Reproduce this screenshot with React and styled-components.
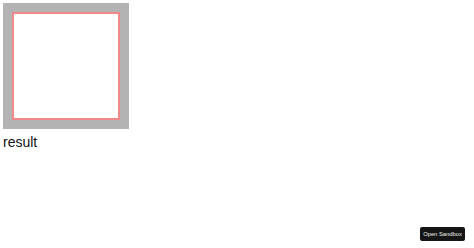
import React from 'react'
import styled, { createGlobalStyle } from 'styled-components'

const GlobalStyle = createGlobalStyle`
  html, body {
    margin: 0;
    padding: 0;
    background: #ffffff;
  }
  body {
    font-family: "Liberation Sans", Arial, sans-serif;
  }
`

const Page = styled.div`
  position: relative;
  width: 474px;
  height: 248px;
  padding: 3px;
  box-sizing: border-box;
`

const Frame = styled.div`
  width: 126px;
  height: 126px;
  padding: 9px;
  box-sizing: border-box;
  background: #b3b3b3;
`

const Canvas = styled.div`
  width: 100%;
  height: 100%;
  box-sizing: border-box;
  border: 2px solid #f08a8a;
  background: #ffffff;
`

const Label = styled.div`
  margin-top: 5px;
  font-size: 14px;
  line-height: 16px;
  color: #111;
`

// 샌드박스 버튼 (우측 하단 고정)
const SandboxButton = styled.button`
  position: absolute;
  right: 9px;
  bottom: 7px;
  width: 45px;
  height: 14px;
  padding: 0;
  border: none;
  border-radius: 2px;
  background: #151515;
  color: #f2f2f2;
  font-family: "Liberation Sans", Arial, sans-serif;
  font-size: 5.8px;
  line-height: 14px;
  text-align: center;
  white-space: nowrap;
`

export default function App() {
  return (
    <Page>
      <GlobalStyle />
      <Frame>
        <Canvas />
      </Frame>
      <Label>result</Label>
      <SandboxButton>Open Sandbox</SandboxButton>
    </Page>
  )
}
